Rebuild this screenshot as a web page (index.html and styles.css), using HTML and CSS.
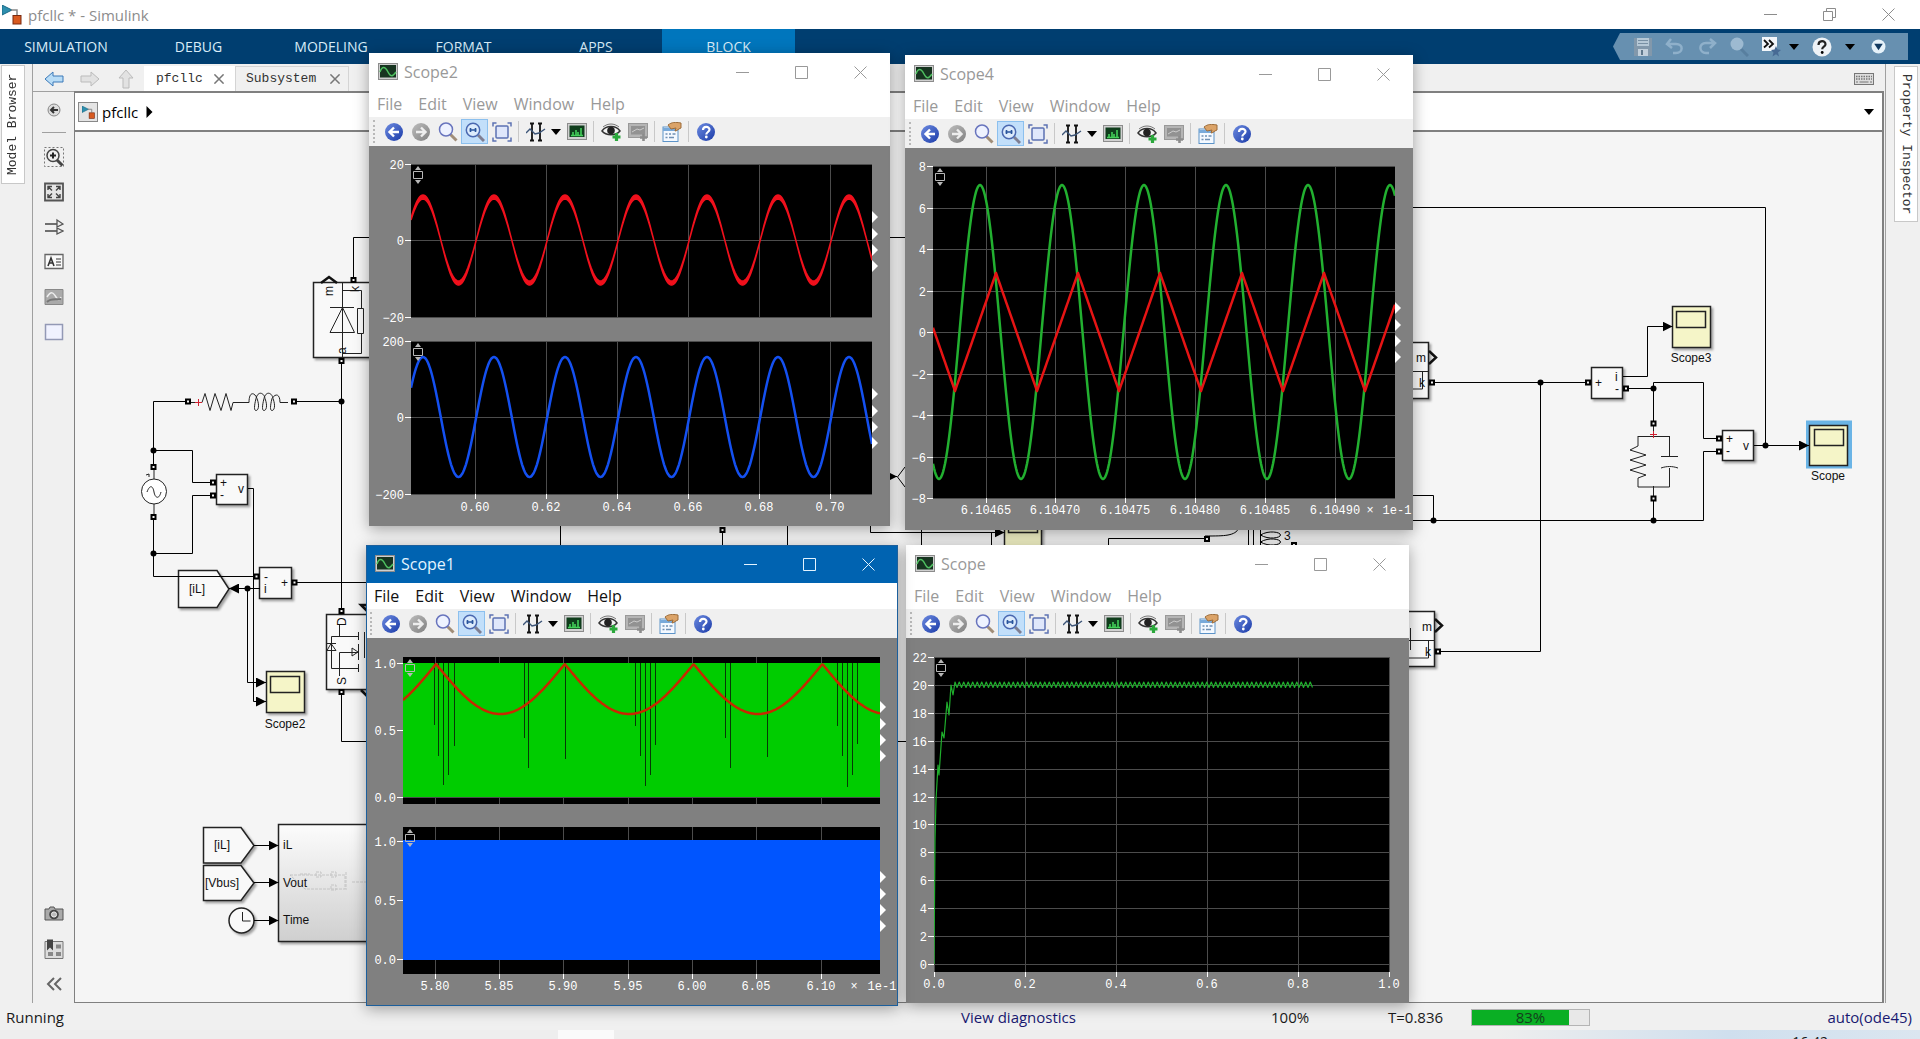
FILE: index.html
```html
<!DOCTYPE html>
<html lang="en">
<head>
<meta charset="utf-8">
<title>pfcllc * - Simulink</title>
<link rel="stylesheet" href="styles.css">
</head>
<body>
<svg class="defs" aria-hidden="true">
  <defs>
    <linearGradient id="g-blue" x1="0" y1="0" x2="1" y2="1"><stop offset="0" stop-color="#6d8be0"/><stop offset="1" stop-color="#1b3ba8"/></linearGradient>
    <linearGradient id="g-gray" x1="0" y1="0" x2="1" y2="1"><stop offset="0" stop-color="#bdbdbd"/><stop offset="1" stop-color="#808080"/></linearGradient>
    <linearGradient id="g-sub" x1="0" y1="0" x2="0" y2="1"><stop offset="0" stop-color="#fcfcfc"/><stop offset="1" stop-color="#cfcfcf"/></linearGradient>
    <filter id="drop" x="-20%" y="-20%" width="150%" height="150%"><feDropShadow dx="2" dy="2" stdDeviation="1" flood-color="#000" flood-opacity=".35"/></filter>
    <marker id="arrow" viewBox="0 0 10 10" refX="10" refY="5" markerWidth="10" markerHeight="10" markerUnits="userSpaceOnUse" orient="auto"><path d="M0 0 10 5 0 10z"/></marker>
    <g id="port"><rect x="-2" y="-2" width="4" height="4" fill="#f5f5f5" stroke="#000" stroke-width="2"/></g>
    <g id="dot"><circle r="3" fill="#000"/></g>
  </defs>
  <symbol id="i-model" viewBox="0 0 20 20"><path d="M0 0 10 5 0 10z" fill="#2e8fae" stroke="#1a6a86"/><path d="M9 5h6v5" fill="none" stroke="#888" stroke-width="1.5"/><rect x="11" y="10.500" width="8" height="8.500" fill="#d85a20" stroke="#7a2a10"/></symbol>
  <symbol id="i-scope" viewBox="0 0 20 18"><rect x=".5" y=".5" width="19" height="16" fill="#cfcfcf" stroke="#8c8c8c"/><rect x="2" y="2" width="16" height="12.500" fill="#173420"/><path d="M2 9c2-6 5-6 8 0s5 4 8 0" fill="none" stroke="#4fc060" stroke-width="1.500"/></symbol>
  <symbol id="i-back" viewBox="0 0 20 20"><circle cx="10" cy="10" r="9" fill="url(#g-blue)"/><path d="M15 10H6M10 5.500 5.500 10l4.500 4.500" fill="none" stroke="#fff" stroke-width="2.400"/></symbol>
  <symbol id="i-forward" viewBox="0 0 20 20"><circle cx="10" cy="10" r="9" fill="url(#g-gray)"/><path d="M5 10h9M10 5.500l4.500 4.500-4.500 4.500" fill="none" stroke="#eee" stroke-width="2.400"/></symbol>
  <symbol id="i-zoom" viewBox="0 0 20 20"><path d="m12.500 12.500 6 6" stroke="#a08d78" stroke-width="3"/><circle cx="8" cy="7.500" r="6.500" fill="#eef2ff" stroke="#6874bd" stroke-width="1.500"/></symbol>
  <symbol id="i-zoomx" viewBox="0 0 20 20"><path d="m13 13 6 6" stroke="#7f7f92" stroke-width="3"/><circle cx="8" cy="8" r="6.700" fill="#dcebfc" stroke="#4a68b0" stroke-width="1.500"/><path d="M4.500 8h7M5.500 6v4M10.500 6v4" stroke="#29549c" stroke-width="1.600"/></symbol>
  <symbol id="i-fit" viewBox="0 0 20 20"><rect x="4" y="4" width="12" height="12" rx="1" fill="#dfe7fb" stroke="#5c72b2" stroke-width="1.500"/><path d="M1 4.500V1h3.500M15.500 1H19v3.500M19 15.500V19h-3.500M4.500 19H1v-3.500" fill="none" stroke="#5c72b2" stroke-width="1.500"/></symbol>
  <symbol id="i-cursor" viewBox="0 0 20 20"><path d="M6 1v18M14 1v18M4 1.500h4M12 1.500h4M4 18.500h4M12 18.500h4" stroke="#111" stroke-width="1.800"/><path d="M0 11 4 7l5 5 4-1 6-4" fill="none" stroke="#3c5578" stroke-width="1.400"/></symbol>
  <symbol id="i-spectrum" viewBox="0 0 20 18"><rect x=".5" y=".5" width="19" height="16" fill="#d0d0d0" stroke="#8c8c8c"/><rect x="2.500" y="2.500" width="15" height="11.500" fill="#0f3d1c"/><path d="M4 12.500h12M6 12V9M9 12V7M11 12V9M14 12V5" stroke="#44cf5a" stroke-width="1.600"/></symbol>
  <symbol id="i-eye" viewBox="0 0 20 20"><path d="M1 9c4-6 14-6 18 0-4 5-14 5-18 0z" fill="#f2f2f2" stroke="#333" stroke-width="1.500"/><path d="M2 5c5-4 11-4 16 0" fill="none" stroke="#777"/><circle cx="10" cy="8.500" r="3.800" fill="#222"/><path d="M15.500 11v8M11.500 15h8" stroke="#2ba83c" stroke-width="3.200"/></symbol>
  <symbol id="i-snap" viewBox="0 0 20 20"><rect x=".5" y="1.500" width="19" height="14" fill="#b5b5b5" stroke="#999"/><rect x="3" y="4" width="14" height="8.500" fill="#929292"/><path d="M4 10l5-3 3 1 4-2" fill="none" stroke="#ccc"/><path d="M15.500 12v7M12 15.500h7" stroke="#8c8c8c" stroke-width="2.600"/></symbol>
  <symbol id="i-props" viewBox="0 0 20 20"><rect x="1" y="5" width="15" height="14.500" fill="#f4f9ff" stroke="#5c93c8"/><path d="M1 6h15v3H1z" fill="#79aada"/><path d="M3.500 12h2M7 12h2M10.500 12h3M3.500 15.500h2M7 15.500h5" stroke="#6f90b4" stroke-width="1.500"/><path d="M6 3c4-3 7-3 13-2v5c-3 1-4 3-6 3l1-3-5 1z" fill="#dba368" stroke="#9c6b38"/></symbol>
  <symbol id="i-help" viewBox="0 0 20 20"><circle cx="10" cy="10" r="9" fill="url(#g-blue)"/><path d="M7 8c0-4 6.500-4 6.500-.500 0 2.500-3.200 2.500-3.200 5" fill="none" stroke="#fff" stroke-width="2.200"/><circle cx="10.300" cy="15" r="1.400" fill="#fff"/></symbol>
  <symbol id="i-caret" viewBox="0 0 10 6"><path d="M0 0h10L5 6z"/></symbol>
  <symbol id="i-min" viewBox="0 0 13 13"><path d="M0 6.500h13" fill="none" stroke="currentColor"/></symbol>
  <symbol id="i-max" viewBox="0 0 13 13"><path d="M.5.5h12v12H.5z" fill="none" stroke="currentColor"/></symbol>
  <symbol id="i-restore" viewBox="0 0 13 13"><path d="M.5 3.500h9v9h-9zM3.500 3V.5h9v9H10" fill="none" stroke="currentColor"/></symbol>
  <symbol id="i-close" viewBox="0 0 13 13"><path d="m.5.5 12 12m0-12-12 12" fill="none" stroke="currentColor"/></symbol>
  <symbol id="i-arrow" viewBox="0 0 20 16"><path d="M1 8 9 1v4h10v6H9v4z"/></symbol>
</svg>

<div class="app">
  <header class="titlebar">
    <svg class="app-icon"><use href="#i-model"/></svg>
    <h1>pfcllc * - Simulink</h1>
    <div class="win-buttons">
      <button aria-label="Minimize"><svg><use href="#i-min"/></svg></button>
      <button aria-label="Restore"><svg><use href="#i-restore"/></svg></button>
      <button aria-label="Close"><svg><use href="#i-close"/></svg></button>
    </div>
  </header>

  <nav class="toolstrip">
    <button>SIMULATION</button><button>DEBUG</button><button>MODELING</button><button>FORMAT</button><button>APPS</button><button class="current">BLOCK</button>
    <div class="quick">
      <button class="q" aria-label="Save"><svg class="dim" viewBox="0 0 20 20"><path d="M1 1h18v18H1z" fill="#8298ab"/><path d="M4 1h12v8H4z" fill="#b6c8d6"/><path d="M5 3.500h10M5 6.500h10" stroke="#7890a4"/><path d="M5 12h10v7H5z" fill="#c2d0dc"/><path d="M9 13v5" stroke="#60788c" stroke-width="2"/></svg></button>
      <button class="q" aria-label="Undo"><svg viewBox="0 0 20 20"><path d="M6 2 2 7l5 4M2 7h9c8 0 7 9 0 9H8" fill="none" stroke="#8fb0ca" stroke-width="2.500"/></svg></button>
      <button class="q" aria-label="Redo"><svg viewBox="0 0 20 20"><path d="m13 2 5 4-5 5M18 6H9c-8 0-7 10 0 10h3" fill="none" stroke="#8fb0ca" stroke-width="2.500"/></svg></button>
      <button class="q" aria-label="Find"><svg viewBox="0 0 20 20"><path d="m11 11 8 8" stroke="#587f9f" stroke-width="3"/><circle cx="8" cy="7" r="6.500" fill="#9dbad1"/></svg></button>
      <button class="q" aria-label="Favorites"><svg viewBox="0 0 20 20"><rect x="1" width="15" height="14" fill="#f2f6fa"/><path d="m3 3 4 4-4 3.500M8 3l4 4-4 3.500" fill="none" stroke="#111" stroke-width="1.800"/><path d="m15 9 1.500 3.500 3.500.500-3 2.500 1 4-3-2.200-3.500 2.200 1-4-2.500-2.500 3.500-.500z" fill="#476a94"/></svg></button>
      <button class="q narrow" aria-label="Favorites list"><svg class="caret"><use href="#i-caret"/></svg></button>
      <button class="q wide" aria-label="Help"><svg viewBox="0 0 20 20"><circle cx="10" cy="10" r="9.500" fill="#eef2f6"/><path d="M6.500 8c0-5 7-5 7-.800 0 2.500-3.300 2.500-3.300 5" fill="none" stroke="#222" stroke-width="2.200"/><circle cx="10.200" cy="15.500" r="1.400"/></svg></button>
      <button class="q narrow" aria-label="Help list"><svg class="caret"><use href="#i-caret"/></svg></button>
      <button class="q wide" aria-label="Minimize toolstrip"><svg class="small" viewBox="0 0 14 14"><circle cx="7" cy="7" r="6.500" fill="#e6f2fa"/><path d="M3 4.500h8L7 10.500z" fill="#123a60"/></svg></button>
    </div>
  </nav>

  <div class="workspace">
    <aside class="dock left"><button class="dock-tab">Model Browser</button></aside>
    <main class="center">
      <div class="tabbar">
        <button class="nav-arrow back" aria-label="Back"><svg><use href="#i-arrow"/></svg></button>
        <button class="nav-arrow fwd" aria-label="Forward"><svg><use href="#i-arrow"/></svg></button>
        <button class="nav-arrow up" aria-label="Up to parent"><svg><use href="#i-arrow"/></svg></button>
        <div class="doc-tab active"><span>pfcllc</span><button aria-label="Close pfcllc"><svg><use href="#i-close"/></svg></button></div>
        <div class="doc-tab"><span>Subsystem</span><button aria-label="Close Subsystem"><svg><use href="#i-close"/></svg></button></div>
        <button class="keyboard" aria-label="Shortcuts"><svg viewBox="0 0 20 12"><rect x=".5" y=".5" width="19" height="11" fill="#ddd" stroke="#777"/><path d="M2 3.500h16M2 6h16" stroke="#777" stroke-width="1.500" stroke-dasharray="1.500 1"/><path d="M2 9h2M5.500 9h9M16 9h2" stroke="#777"/></svg></button>
      </div>
      <div class="editor-row">
        <div class="palette">
          <button aria-label="Hide browser"><svg viewBox="0 0 14 14" class="small"><circle cx="7" cy="7" r="6" fill="#ddd" stroke="#888"/><path d="M11 7H4M7 4 4 7l3 3" fill="none" stroke="#333" stroke-width="2"/></svg></button>
          <hr>
          <button aria-label="Zoom"><svg viewBox="0 0 20 20"><path d="M.5.5h19v19H.5z" fill="none" stroke="#777" stroke-dasharray="2 2"/><path d="m12.500 12.500 6 6" stroke="#444" stroke-width="3"/><circle cx="9" cy="8.500" r="6" fill="#eee" stroke="#444" stroke-width="1.500"/><path d="M6 8.500h6M9 5.500v6" stroke="#222" stroke-width="2"/></svg></button>
          <button aria-label="Fit to view"><svg viewBox="0 0 20 20"><path d="M1 1.500h18v17H1z" fill="#e6e6e6" stroke="#555" stroke-width="1.800"/><path d="M4 8V4.500h4M4 4.500l4 4M16 8V4.500h-4M16 4.500l-4 4M4 12v3.500h4M4 15.500l4-4M16 12v3.500h-4M16 15.500l-4-4" fill="none" stroke="#444" stroke-width="1.400"/></svg></button>
          <button aria-label="Signal lines"><svg viewBox="0 0 20 20"><path d="M1 7h14M1 14h14" stroke="#444" stroke-width="1.500"/><path d="m13 3 6 4-6 3zM13 11l6 3-6 3z" fill="#eee" stroke="#555" stroke-width="1.300"/></svg></button>
          <button aria-label="Annotation"><svg viewBox="0 0 20 20"><path d="M1 2.500h18v14H1z" fill="#fafafa" stroke="#666" stroke-width="1.300"/><path d="m4 14 3-8 3 8M5 11h4" fill="none" stroke="#333" stroke-width="1.600"/><path d="M12 7h5M12 10h5M12 13h5" stroke="#777" stroke-width="1.300"/></svg></button>
          <button aria-label="Image"><svg viewBox="0 0 20 20"><path d="M1 2.500h18v15H1z" fill="#aaa" stroke="#888"/><path d="M3 10c4-6 6-5 9 0s4 2 5 0" fill="none" stroke="#eee" stroke-width="1.500"/><path d="M3 15c4-4 8-2 14-3" fill="none" stroke="#777" stroke-width="2"/></svg></button>
          <button aria-label="Area"><svg viewBox="0 0 20 20"><path d="M1.500 2.500h17v15h-17z" fill="#f0f2ff" stroke="#9399b5" stroke-width="1.500"/></svg></button>
          <span class="fill"></span>
          <button aria-label="Screenshot"><svg viewBox="0 0 20 20"><path d="M1 5h4l1-2h4l1 2h8v11H1z" fill="#aaa" stroke="#555"/><circle cx="10" cy="10.500" r="4.800" fill="#444"/><circle cx="10" cy="10.500" r="2.600" fill="#bbb" stroke="#eee"/></svg></button>
          <button aria-label="Library"><svg viewBox="0 0 20 20"><path d="M1 2.500h18v17H1z" fill="#ddd" stroke="#777"/><path d="M3 .5h6v11l-3-3-3 3z" fill="#444"/><path d="M12 5.500h5v4h-5zM12 13h5v4h-5zM4 13h5v4H4z" fill="#888"/></svg></button>
          <button aria-label="Collapse palette"><svg viewBox="0 0 20 20"><path d="m10 4-6 6 6 6M17 4l-6 6 6 6" fill="none" stroke="#666" stroke-width="2"/></svg></button>
        </div>
        <section class="editor">
          <div class="explorer-bar">
            <svg class="crumb-icon"><use href="#i-model" x="3" y="3" width="13" height="13"/></svg>
            <a href="#canvas">pfcllc</a><svg class="crumb-arrow" viewBox="0 0 6 12"><path d="M0 0 6 6 0 12z"/></svg>
            <button aria-label="Model path list"><svg class="caret"><use href="#i-caret"/></svg></button>
          </div>
          <div class="canvas" id="canvas">
            <svg class="schematic" width="1808" height="871" viewBox="75 132 1808 871">
              <g class="blk" filter="url(#drop)">
                <path d="M313.500 282.500h70v75h-70z"/><path d="M216.500 474.500h31v30h-31z"/><path d="M259.500 567.500h32v31h-32z"/>
                <path d="M178.500 570.500H217l12 18.500-12 18.500h-38.500z"/><path d="M326.500 614.500h60v75h-60z"/>
                <path d="M203.500 827.500H241l13 18-13 17.500h-37.500z"/><path d="M203.500 865.500H241l13 17.500-13 17.500h-37.500z"/>
                <circle cx="241.500" cy="920.500" r="12.500"/><path d="M278.500 824.500h120v117h-120z" fill="url(#g-sub)"/>
                <path d="M1380.500 342.500h48v56h-48z"/><path d="M1380.500 611.500h54v55h-54z"/>
                <path d="M1591.500 367.500h31v31h-31z"/><path d="M1722.500 430.500h31v30h-31z"/>
                <g class="scope-blk"><path d="M266.500 671.500h38v41h-38z"/><path d="M1672.500 306.500h38v41h-38z"/><path d="M1004.500 510.500h37v41h-37z"/></g>
              </g>
              <path d="M1806 420.500h46v48h-46z" fill="#6ab4e6"/>
              <g class="scope-blk"><path d="M1809.500 425.500h38v40h-38z"/><path d="M270.500 676.500h29v16h-29zM1676.500 311.500h29v16h-29zM1814.500 429.500h29v16h-29zM1008.500 515.500h29v17h-29z"/></g>

              <g class="wire">
                <path d="M369.500 237.500h-16v42M341.500 361v250M294 401.500h47.500M188 401.500h-34.500V467M153.500 450.500h39v32H213M213 495.500h-20.500v58h-39M153.500 517v59.500h103M295 582.500h80M341.500 692v49.500h40M247.500 588.500H260"/>
                <path d="M1400 207.500h365.500v238M1432 382.500h156M1540.500 382.500v269H1438M1626 388.500h27.500v35M1653.500 388.500v-6h50v56H1719M1653.500 498.500v22M1400 520.500h303.500v-69H1719M1433.500 520.500v-25H1400"/>
                <path d="M560.500 520v40M722.500 530v30M787.500 520v40M921.500 520v40M991.500 533v20M1108.500 555v-16.500h98M1294 545.500h32M880 237.500h40M880 741.500h40"/>
                <g marker-end="url(#arrow)">
                  <path d="M248 488.500h5.500v213H266"/><path d="M247.500 588.500v94H266"/><path d="M247.500 588.500H229"/>
                  <path d="M254 845.500h24.500"/><path d="M254 882.500h24.500"/><path d="M254 920.500h24.500"/>
                  <path d="M1623 376.500h24.500v-50h25"/><path d="M1754 445.500h55"/><path d="M870.500 520v12.500h134"/><path d="M880 476.500h17"/>
                </g>
                <path d="m905 467-7.500 10 7.500 10M1205 536c20 0 30 0 34-8M1248.500 520v30M1253.500 520v30"/>
                <path d="M1260.500 535c8-5 20-3 20 0s-12 5-20 0m0 7c8-5 20-3 20 0s-12 5-20 0M1260.500 528v18"/>
              </g>

              <g class="thin">
                <path d="M342.500 282v76M330 307.500h24M342.500 307.500 330 332.500h24.500zM342.500 290.500h19v18M357.500 308.500h6v25h-6zM361.500 333.500v20h-19"/>
                <path d="M190 402.500h12l3-9 5 17 5-17 6 17 5-17 5 17 2-8h16c0-12 6-10 8-4 3 8 1 12-1 12s-2-4 0-12 8-6 9 0c3 8 1 12-1 12s-2-4 0-12 8-6 9 0c3 8 1 12-1 12s-2-4 0-12c4-6 8-4 8 4h8"/>
                <circle cx="154" cy="491.500" r="12.500" fill="#fff"/><path d="M147 492c3-8 6-6 7 0s5 8 7 0M154 469v10M154 504v12M146 475l3-1v3M242.500 912v9h8"/>
                <path d="M358 636.500h-26.500v32H358M339.500 625v11M358 652.500h-18.500V676M327 650.500h9l-5-7-4 7M327 643.500h9M352 648l6 4-6 4zM358.500 632v8M358.500 644v16M358.500 664v8M364.500 632v26"/>
                <path d="M1380 371.500h49M1422.500 371v18h-20M1380 640.500h55M1428.500 640v18h-20M1410.500 628v22"/>
                <path d="M1653.500 426v10M1638 436.500h31.500M1638 436v10l-8 4 16 5-16 5 16 5-16 5 16 5-8 3v9h31.500v-19M1669.500 436v20M1661 456.500h17M1661 468c6-2 11-2 17 0M1653.500 486v10"/>
              </g>
              <path d="M195 402.500h7M198.500 399v7M1650 434.500h7M1653.500 431v7" stroke="#d02030"/>
              <path d="m321 283 8-6 8 6M1429 351l7 6.500-7 6.500M1435 619l7 6.500-7 6.500M361 605h6v6zM361 690l6 6" class="chev"/>
              <path d="M290 875h55v14h-40zM316 872h5v5h-5zM331 872h5v5h-5zM331 885h5v5h-5zM346 872v18M352 882h20M300 874h10" fill="none" stroke="#c4c4c4" stroke-dasharray="3 1"/>

              <use href="#port" x="353.500" y="280"/><use href="#port" x="341.500" y="361"/><use href="#port" x="294" y="401.500"/><use href="#port" x="188" y="401.500"/><use href="#port" x="153.500" y="467"/><use href="#port" x="153.500" y="517"/><use href="#port" x="213" y="482.500"/><use href="#port" x="213" y="495.500"/><use href="#port" x="256.500" y="576.500"/><use href="#port" x="294.500" y="582.500"/><use href="#port" x="341.500" y="611"/><use href="#port" x="341.500" y="692"/>
              <use href="#port" x="1432" y="382.500"/><use href="#port" x="1438" y="651.500"/><use href="#port" x="1588" y="382.500"/><use href="#port" x="1626" y="388.500"/><use href="#port" x="1653.500" y="423.500"/><use href="#port" x="1653.500" y="498.500"/><use href="#port" x="1719" y="438.500"/><use href="#port" x="1719" y="451.500"/><use href="#port" x="722.500" y="530"/><use href="#port" x="1207" y="539"/><use href="#port" x="1294" y="545"/>
              <use href="#dot" x="341.500" y="401.500"/><use href="#dot" x="153.500" y="450.500"/><use href="#dot" x="153.500" y="553.500"/><use href="#dot" x="247.500" y="588.500"/><use href="#dot" x="1540.500" y="382.500"/><use href="#dot" x="1653.500" y="388.500"/><use href="#dot" x="1653.500" y="520.500"/><use href="#dot" x="1433.500" y="520.500"/><use href="#dot" x="1765.500" y="445.500"/>

              <g class="lbl">
                <text x="285" y="728" text-anchor="middle">Scope2</text><text x="1691" y="362" text-anchor="middle">Scope3</text><text x="1828" y="480" text-anchor="middle">Scope</text>
                <text x="197" y="593" text-anchor="middle">[iL]</text><text x="222" y="849" text-anchor="middle">[iL]</text><text x="222" y="887" text-anchor="middle">[Vbus]</text>
                <text x="283" y="849">iL</text><text x="283" y="887">Vout</text><text x="283" y="924">Time</text>
                <text x="238" y="493">v</text><text x="220" y="487">+</text><text x="220" y="499">-</text>
                <text x="264" y="581">-</text><text x="264" y="593">i</text><text x="281" y="587">+</text>
                <text x="1595" y="387">+</text><text x="1615" y="381">i</text><text x="1615" y="393">-</text>
                <text x="1726" y="443">+</text><text x="1726" y="455">-</text><text x="1743" y="450">v</text>
                <text x="1416" y="362">m</text><text x="1422" y="631">m</text><text x="1419" y="387">k</text><text x="1425" y="656">k</text><text x="1284" y="540">3</text>
                <text transform="translate(333 296) rotate(-90)">m</text><text transform="translate(359 292) rotate(-90)">k</text><text transform="translate(346 354) rotate(-90)">a</text><text transform="translate(346 626) rotate(-90)">D</text><text transform="translate(346 685) rotate(-90)">S</text>
              </g>
            </svg>
          </div>
        </section>
      </div>
    </main>
    <aside class="dock right"><button class="dock-tab">Property Inspector</button></aside>
  </div>

  <footer class="statusbar">
    <span class="state">Running</span>
    <a href="#diagnostics" class="diag">View diagnostics</a>
    <span class="zoom">100%</span>
    <span class="time">T=0.836</span>
    <span class="meter"><progress value="83" max="100" aria-label="Simulation progress"></progress><span>83%</span></span>
    <a href="#solver" class="solver">auto(ode45)</a>
  </footer>
  <div class="taskbar"><i></i><time>16:42</time></div>
</div>

<article class="window s2" data-scope="scope2"><header><svg><use href="#i-scope"/></svg><h2>Scope2</h2></header></article>
<article class="window s4" data-scope="scope4"><header><svg><use href="#i-scope"/></svg><h2>Scope4</h2></header></article>
<article class="window s0" data-scope="scope"><header><svg><use href="#i-scope"/></svg><h2>Scope</h2></header></article>
<article class="window s1 focused" data-scope="scope1"><header><svg><use href="#i-scope"/></svg><h2>Scope1</h2></header></article>

<template id="win-buttons">
  <div class="win-buttons">
    <button aria-label="Minimize"><svg><use href="#i-min"/></svg></button>
    <button aria-label="Maximize"><svg><use href="#i-max"/></svg></button>
    <button aria-label="Close"><svg><use href="#i-close"/></svg></button>
  </div>
</template>
<template id="win-tools">
  <nav class="menubar"><button>File</button><button>Edit</button><button>View</button><button>Window</button><button>Help</button></nav>
  <div class="toolbar">
    <span class="grip"></span>
    <button aria-label="Step back"><svg><use href="#i-back"/></svg></button>
    <button aria-label="Step forward"><svg><use href="#i-forward"/></svg></button>
    <button aria-label="Zoom"><svg><use href="#i-zoom"/></svg></button>
    <button class="on" aria-label="Zoom X" aria-pressed="true"><svg><use href="#i-zoomx"/></svg></button>
    <button aria-label="Scale axes"><svg><use href="#i-fit"/></svg></button>
    <span class="sep"></span>
    <button aria-label="Cursors"><svg><use href="#i-cursor"/></svg></button>
    <button class="drop" aria-label="Measurements"><svg class="caret"><use href="#i-caret"/></svg></button>
    <button aria-label="Spectrum"><svg><use href="#i-spectrum"/></svg></button>
    <span class="sep"></span>
    <button aria-label="Show signal"><svg><use href="#i-eye"/></svg></button>
    <button aria-label="Snapshot"><svg><use href="#i-snap"/></svg></button>
    <span class="sep"></span>
    <button aria-label="Properties"><svg><use href="#i-props"/></svg></button>
    <span class="sep"></span>
    <button aria-label="Help"><svg><use href="#i-help"/></svg></button>
  </div>
</template>
<script src="scopes.js"></script>
</body>
</html>
```

FILE: styles.css
```css
* { box-sizing: border-box; }
body { margin: 0; overflow: hidden; font: 15px/20px "Open Sans", "Noto Sans", sans-serif; color: #1a1a1a; }
button { padding: 0; border: 0; background: none; font: inherit; color: inherit; display: flex; align-items: center; justify-content: center; }
a { color: inherit; text-decoration: none; }
h1, h2 { margin: 0; font-weight: 400; }
svg { display: block; }
.defs { position: absolute; width: 0; height: 0; }
.caret { width: 10px; height: 6px; }

.app { display: flex; flex-direction: column; height: 100vh; background: #f0f0f0; }
.titlebar { display: flex; align-items: center; height: 29px; background: #fff; color: #8c8c8c; padding: 0 2px; }
.titlebar h1 { font-size: 15px; flex: 1; }
.app-icon { width: 20px; height: 20px; margin-right: 6px; }
.win-buttons { display: flex; margin-left: auto; align-self: stretch; }
.win-buttons button { width: 59px; }
.win-buttons svg { width: 13px; height: 13px; }

.toolstrip { display: flex; height: 35px; background: #003e70; color: #d8ecf8; font-size: 14px; }
.toolstrip > button { flex: 0 0 auto; width: 132px; }
.toolstrip > button:nth-child(even) { width: 133px; }
.toolstrip .current { background: #0076bd; }
.quick { display: flex; align-items: center; margin: 4px 12px 4px auto; padding: 0 9px 0 14px; background: #6790b0; clip-path: polygon(7px 0, 100% 0, 100% 100%, 7px 100%, 0 50%); }
.q { width: 32px; height: 27px; }
.q svg { width: 20px; height: 20px; }
.q.narrow { width: 14px; }
.q.wide { width: 42px; }
.q .caret { width: 10px; height: 6px; }
.q svg.small { width: 15px; height: 15px; }

.workspace { display: flex; flex: 1; min-height: 0; }
.dock { flex: none; padding-top: 1px; }
.dock.left { width: 33px; border-right: 1px solid #a0a0a0; padding-left: 1px; }
.dock.right { width: 35px; border-left: 1px solid #a0a0a0; padding: 2px 0 0 8px; }
.dock-tab { writing-mode: vertical-rl; width: 24px; border: 1px solid #c8c8c8; background: #fff; font: 13px/22px "Liberation Mono", monospace; color: #333; }
.left .dock-tab { transform: rotate(180deg); height: 119px; }
.right .dock-tab { height: 156px; }

.center { display: flex; flex-direction: column; flex: 1; min-width: 0; padding-right: 1px; }
.tabbar { display: flex; height: 27px; padding-top: 2px; padding-left: 3px; }
.nav-arrow { width: 36px; }
.nav-arrow svg { width: 20px; height: 16px; stroke: #bbb; fill: #e2e2e2; }
.nav-arrow.back svg { stroke: #3a78b8; fill: #b8dcf6; }
.nav-arrow.fwd svg { transform: scaleX(-1); }
.nav-arrow.up svg { transform: rotate(90deg); }
.doc-tab { display: flex; align-items: center; justify-content: space-between; width: 91px; padding: 0 10px 0 11px; font: 13px/20px "Liberation Mono", monospace; color: #333; border: 1px solid #d4d4d4; border-bottom: 0; }
.doc-tab.active { background: #fff; border-color: #fff; }
.doc-tab:not(.active) { width: 114px; padding: 0 8px 0 10px; }
.doc-tab svg { width: 10px; height: 10px; stroke-width: 2; color: #777; }
.keyboard { margin: 0 10px 0 auto; }
.keyboard svg { width: 20px; height: 12px; }

.editor-row { display: flex; flex: 1; min-height: 0; }
.palette { display: flex; flex-direction: column; align-items: center; width: 41px; border-top: 1px solid #a0a0a0; padding-bottom: 2px; }
.palette button { width: 36px; height: 35px; flex: none; }
.palette svg { width: 20px; height: 20px; }
.palette svg.small { width: 14px; height: 14px; }
.palette hr { width: 24px; margin: 5px 0 6px; border: 0; border-top: 1px solid #a0a0a0; }
.fill { flex: 1; }
.editor { display: flex; flex-direction: column; flex: 1; min-width: 0; border: 1px solid #808080; border-right-width: 2px; }
.explorer-bar { display: flex; align-items: center; flex: none; height: 40px; padding: 0 8px 0 3px; background: #fff; border-top: 1px solid #808080; border-bottom: 2px solid #808080; color: #000; }
.crumb-icon { width: 20px; height: 20px; border: 1px solid #888; background: #e4e4e4; margin-right: 4px; }
.crumb-arrow { width: 7px; height: 12px; margin-left: 8px; }
.explorer-bar button { margin-left: auto; }
.canvas { position: relative; flex: 1; overflow: hidden; background: #f5f5f5; }
.schematic { position: absolute; left: 0; top: 0; }
.blk { fill: #f9f9f9; stroke: #222; stroke-width: 1.5px; }
.scope-blk { fill: #f5f5c8; stroke: #222; stroke-width: 1.5px; }
.wire { fill: none; stroke: #000; }
.thin { fill: none; stroke: #222; }
.chev { fill: none; stroke: #111; stroke-width: 2.5px; }
.lbl { font: 12px "Liberation Sans", Arial, sans-serif; fill: #111; }

.statusbar { display: flex; align-items: center; flex: none; height: 26px; margin-top: 1px; padding: 0 8px 0 6px; }
.state { flex: 1; }
.diag, .solver { color: #191970; }
.diag { width: 310px; }
.zoom { width: 117px; }
.time { width: 83px; }
.meter { position: relative; width: 119px; height: 17px; }
.meter span { position: absolute; inset: 0; text-align: center; line-height: 17px; color: #14401c; }
progress { appearance: none; display: block; width: 119px; height: 17px; border: 1px solid #b4b4b4; }
progress::-webkit-progress-bar { background: #e8e8e8; }
progress::-webkit-progress-value { background: #0aaf24; }
.solver { width: 322px; text-align: right; }
.taskbar { position: relative; flex: none; height: 9px; overflow: hidden; background: linear-gradient(90deg, #eeeeee 78%, #cfdfee 90%, #dbe6f0); }
.taskbar i { display: block; width: 56px; height: 9px; margin-left: 558px; background: #fafafa; }
.taskbar time { position: absolute; right: 92px; top: 2px; font-size: 14px; }

.window { position: absolute; display: flex; flex-direction: column; background: #808080; color: #999; box-shadow: 0 3px 14px rgba(0, 0, 0, .35); font-size: 16px; }
.window header { display: flex; align-items: center; flex: none; height: 38px; padding-left: 9px; background: #fff; }
.window header > svg { width: 20px; height: 18px; margin-right: 6px; }
.window h2 { font-size: 16px; }
.s2 { left: 369px; top: 53px; width: 521px; height: 473px; }
.s4 { left: 905px; top: 55px; width: 508px; height: 475px; }
.s0 { left: 906px; top: 545px; width: 503px; height: 458px; }
.s1 { left: 366px; top: 545px; width: 532px; height: 461px; }
.focused { color: #111; outline: 1px solid #1c5f9c; outline-offset: -1px; }
.focused header { background: #0063b1; color: #e4f4ff; }
.menubar { display: flex; gap: 16px; flex: none; height: 26px; padding-left: 8px; background: #fff; }
.toolbar { display: flex; align-items: center; flex: none; height: 29px; background: #f0f0f0; color: #000; }
.toolbar button { width: 27px; height: 25px; }
.toolbar svg { width: 20px; height: 20px; }
.toolbar .drop { width: 14px; }
.toolbar .caret { width: 10px; height: 6px; }
.toolbar .on { background: #c2dffa; border: 1px solid #8cc0ee; }
.grip { width: 3px; height: 23px; margin: 0 4px; border-left: 2px dotted #b8b8b8; }
.sep { width: 1px; height: 21px; margin: 0 3px; background: #c8c8c8; }
.plots { flex: 1; min-height: 0; width: 100%; }
.focused .plots { padding: 0 1px 1px; }
.plots text { font: 12px "Liberation Mono", monospace; fill: #fff; }
.grid { stroke: #4c4c4c; fill: none; }
.tick { stroke: #fff; fill: none; }
.handle { fill: none; stroke: #b8b8b8; }
```

FILE: scopes.js
```js
// Scope definitions. All lengths are in desktop pixels.
const sine = (c, a, peak, period) => x => c - a * Math.cos(2 * Math.PI * (x - peak) / period);
const curve = (x0, x1, f) => {
  const pts = [];
  for (let x = x0; x <= x1; x += 1) pts.push(x + ',' + f(x).toFixed(1));
  return pts;
};
const line = (pts, color, width) =>
  `<polyline points="${pts.join(' ')}" fill="none" stroke="${color}" stroke-width="${width}" stroke-linejoin="round"/>`;

const triangle = x => {
  const t = (((x - 996) / 82) % 1 + 1) % 1;
  return 273 + 118 * (t < .5 ? t * 2 : 2 - t * 2);
};
const settle = [[934, 964], [935, 840], [936, 800], [938, 765], [939, 775], [942, 732], [944, 738], [947, 702], [949, 715], [951, 685], [953, 695], [955, 682]].map(p => p.join(','));
for (let x = 957, i = 0; x <= 1314; x += 2.25, i++) settle.push(x + ',' + (i % 2 ? 682 : 687.5));

const spikes = [[433, 725], [437, 756], [442, 785], [447, 775], [453, 746], [523, 738], [527, 768], [564, 759], [634, 726], [639, 756], [644, 786], [649, 775], [654, 745], [724, 738], [729, 768], [766, 757], [836, 726], [841, 756], [846, 787], [851, 775], [856, 744]];

const scopes = {
  scope2: {
    x: 369, y: 146, left: 411, right: 872,
    xs: [475, 546, 617, 688, 759, 830], xl: ['0.60', '0.62', '0.64', '0.66', '0.68', '0.70'], xy: 507,
    axes: [
      { top: 164, bottom: 317, ys: [[164, '20'], [240, '0'], [317, '−20']], arrows: 1,
        draw: () => {
          const outer = curve(411, 872, sine(240, 45, 423, 71)), inner = curve(411, 872, sine(240, 41, 423, 71));
          return `<polygon points="${outer.concat(inner.reverse()).join(' ')}" fill="#f0101c" stroke="#f0101c" stroke-width="1.500"/>`;
        } },
      { top: 341, bottom: 494, ys: [[341, '200'], [417, '0'], [494, '−200']], arrows: 1,
        draw: () => line(curve(411, 872, sine(417, 60, 423, 71)), '#1450f0', 2.5) }
    ]
  },
  scope4: {
    x: 905, y: 148, left: 933, right: 1395,
    xs: [986, 1055, 1125, 1195, 1265, 1335], xl: ['6.10465', '6.10470', '6.10475', '6.10480', '6.10485', '6.10490'], xy: 510, scale: [1370, 1397],
    axes: [{ top: 166, bottom: 498, ys: [8, 6, 4, 2, 0, -2, -4, -6, -8].map((v, i) => [Math.round(166 + i * 41.5), String(v).replace('-', '−')]), arrows: 1,
      draw: () => line(curve(933, 1395, sine(332, 147, 980, 82)), '#22b030', 2.5) + line(curve(933, 1395, triangle), '#e61414', 2.5) }]
  },
  scope: {
    x: 906, y: 638, left: 934, right: 1389,
    xs: [934, 1025, 1116, 1207, 1298, 1389], xl: ['0.0', '0.2', '0.4', '0.6', '0.8', '1.0'], xy: 984,
    axes: [{ top: 657, bottom: 972, ys: [22, 20, 18, 16, 14, 12, 10, 8, 6, 4, 2, 0].map((v, i) => [Math.round(657 + i * 27.9), v]),
      draw: () => line(settle, '#1fae2c', 1.2) }]
  },
  scope1: {
    x: 366, y: 638, left: 402, right: 879,
    xs: [434, 498, 562, 627, 691, 755, 820], xl: ['5.80', '5.85', '5.90', '5.95', '6.00', '6.05', '6.10'], xy: 986, scale: [853, 881],
    axes: [
      { top: 657, bottom: 804, ys: [[663, '1.0'], [730, '0.5'], [797, '0.0']], arrows: 1,
        draw: () => '<path d="M402 663h477v134H402z" fill="#00cc00"/>' +
          spikes.map(([x, y]) => `<path d="M${x}.5 663V${y}" stroke="#063806"/>`).join('') +
          line(curve(402, 879, x => 664 + 50 * Math.abs(Math.sin(Math.PI * (x - 435) / 128.8))), '#c82800', 2.5) },
      { top: 827, bottom: 974, ys: [[841, '1.0'], [900, '0.5'], [959, '0.0']], arrows: 1,
        draw: () => '<path d="M402 840h477v120H402z" fill="#0055ff"/>' }
    ]
  }
};

function renderScope(s) {
  const { left, right } = s;
  let out = '';
  s.axes.forEach((a, i) => {
    out += `<rect x="${left}" y="${a.top}" width="${right - left}" height="${a.bottom - a.top}"/>`;
    out += `<path class="grid" d="${s.xs.map(x => `M${x}.5 ${a.top}V${a.bottom}`).join('')}${a.ys.map(([y]) => `M${left} ${y}.5H${right}`).join('')}"/>`;
    out += `<svg x="${left}" y="${a.top}" width="${right - left}" height="${a.bottom - a.top}" viewBox="${left} ${a.top} ${right - left} ${a.bottom - a.top}">${a.draw()}</svg>`;
    out += `<path class="tick" d="${a.ys.map(([y]) => `M${left - 6} ${y}.5h6`).join('')}"/>`;
    out += a.ys.map(([y, t]) => `<text x="${left - 7}" y="${y + 5}" text-anchor="end">${t}</text>`).join('');
    const hx = left + 7, hy = a.top + 11;
    out += `<path class="handle" d="M${hx - 4.5} ${hy - 3.5}h9v7h-9z"/><path d="M${hx - 3} ${hy - 5}l3-4 3 4zM${hx - 3} ${hy + 5}l3 4 3-4z" fill="#b8b8b8"/>`;
    if (a.arrows) {
      const c = Math.round((a.top + a.bottom) / 2);
      out += [-24, -7, 9, 25].map(d => `<path d="M${right} ${c + d - 6}l6 6-6 6z" fill="#fff"/>`).join('');
    }
    if (i === s.axes.length - 1) out += `<path class="tick" d="${s.xs.map(x => `M${x}.5 ${a.bottom}v5`).join('')}"/>`;
  });
  out += s.xs.map((x, i) => `<text x="${x}" y="${s.xy + 4}" text-anchor="middle">${s.xl[i]}</text>`).join('');
  if (s.scale) out += `<text x="${s.scale[0]}" y="${s.xy + 4}" text-anchor="middle">×</text><text x="${s.scale[1]}" y="${s.xy + 4}" text-anchor="middle">1e-1</text>`;
  return out;
}

document.querySelectorAll('.window').forEach(win => {
  const s = scopes[win.dataset.scope];
  win.querySelector('header').append(document.getElementById('win-buttons').content.cloneNode(true));
  win.append(document.getElementById('win-tools').content.cloneNode(true));
  const svg = document.createElementNS('http://www.w3.org/2000/svg', 'svg');
  svg.setAttribute('class', 'plots');
  svg.innerHTML = `<g transform="translate(${-s.x} ${-s.y})">${renderScope(s)}</g>`;
  win.append(svg);
});
```
